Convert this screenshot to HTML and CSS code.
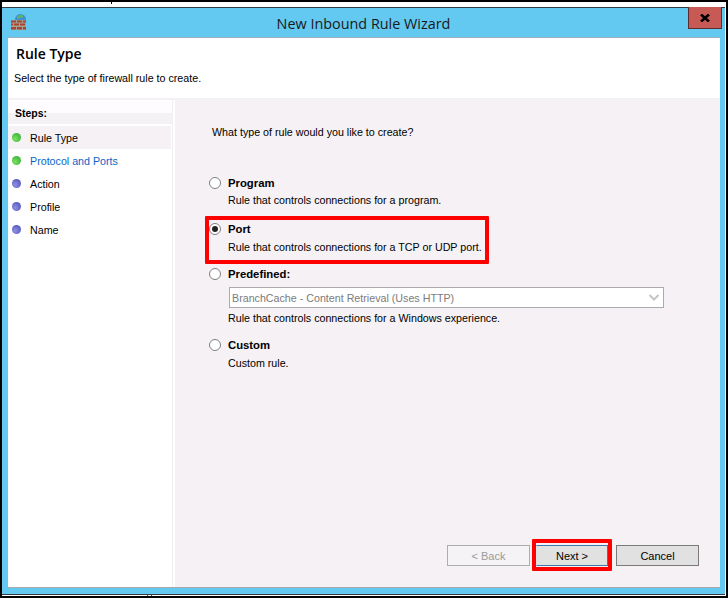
FILE: index.html
```html
<!DOCTYPE html>
<html lang="en">
<head>
<meta charset="utf-8">
<title>New Inbound Rule Wizard</title>
<link rel="stylesheet" href="styles.css">
</head>
<body>
<div class="screen">
  <div class="strip"><span class="tick"></span></div>
  <div class="window">
    <header class="titlebar">
      <svg class="app-icon" width="18" height="18" viewBox="0 0 18 18">
        <circle cx="10.500" cy="6.500" r="5.500" fill="#3f8fd8"/>
        <path d="M7 3.500c2-2 5-2 6.500-.5l-1.500 2-2-.5-1 1.500-2-1z" fill="#5cb85c"/>
        <path d="M12 8l3-1.500c.5 1.500 0 3-1 4.500h-2z" fill="#6fc46f"/>
        <rect x="1" y="7" width="15" height="10" fill="#a8a097"/>
        <path d="M1 7.500h5v2H1zM7 7.500h5v2H7zM13 7.500h3v2h-3zM1 10.500h2v2H1zM4 10.500h5v2H4zM10 10.500h5v2h-5zM1 14h5v2.500H1zM7 14h5v2.500H7zM13 14h3v2.500h-3z" fill="#a5472f"/>
      </svg>
      <span class="title">New Inbound Rule Wizard</span>
      <button class="close" type="button" aria-label="Close">
        <svg width="10" height="8" viewBox="0 0 10 8"><path d="M1 .5l8 7M9 .5l-8 7" stroke="#000" stroke-width="2.600" fill="none"/></svg>
      </button>
    </header>
    <div class="client">
      <section class="heading">
        <h1>Rule Type</h1>
        <p>Select the type of firewall rule to create.</p>
      </section>
      <div class="body">
        <aside class="steps">
          <h2>Steps:</h2>
          <ul>
            <li class="step done current"><i></i>Rule Type</li>
            <li class="step done link"><i></i>Protocol and Ports</li>
            <li class="step"><i></i>Action</li>
            <li class="step"><i></i>Profile</li>
            <li class="step"><i></i>Name</li>
          </ul>
        </aside>
        <main class="panel">
          <p class="question">What type of rule would you like to create?</p>
          <div class="options">
            <div class="option first">
              <div class="label"><span class="radio"></span><b>Program</b></div>
              <p class="desc">Rule that controls connections for a program.</p>
            </div>
            <div class="option marked">
              <div class="label"><span class="radio checked"></span><b>Port</b></div>
              <p class="desc">Rule that controls connections for a TCP or UDP port.</p>
              <span class="redbox port-box"></span>
            </div>
            <div class="option predefined">
              <div class="label"><span class="radio"></span><b>Predefined:</b></div>
              <div class="select">
                <span>BranchCache - Content Retrieval (Uses HTTP)</span>
                <svg width="12" height="7" viewBox="0 0 12 7"><path d="M1.500 1l4.500 4.500L10.500 1" stroke="#c4c4c4" stroke-width="2" fill="none"/></svg>
              </div>
              <p class="desc">Rule that controls connections for a Windows experience.</p>
            </div>
            <div class="option custom">
              <div class="label"><span class="radio"></span><b>Custom</b></div>
              <p class="desc">Custom rule.</p>
            </div>
          </div>
          <footer class="buttons">
            <button class="btn disabled" type="button">&lt; Back</button>
            <div class="marked next-wrap">
              <button class="btn next" type="button">Next &gt;</button>
              <span class="redbox next-box"></span>
            </div>
            <button class="btn cancel" type="button">Cancel</button>
          </footer>
        </main>
      </div>
    </div>
  </div>
  <span class="bottom-ticks"></span>
</div>
</body>
</html>
```
FILE: styles.css
```css
* { box-sizing: border-box; }
html, body { margin: 0; padding: 0; }
body {
  width: 728px;
  height: 598px;
  overflow: hidden;
  background: #000;
  font-family: "Liberation Sans", Arial, sans-serif;
  font-size: 10.7px;
  color: #000;
}
p, h1, h2, ul { margin: 0; padding: 0; }
ul { list-style: none; }

.screen {
  position: relative;
  width: 728px;
  height: 598px;
  border: 2px solid #000;
  display: flex;
  flex-direction: column;
  background: #fff;
}
.strip { height: 5px; background: #fff; position: relative; flex: none; }
.tick { position: absolute; left: 109px; top: 0; width: 1px; height: 2px; background: #000; }
.bottom-ticks {
  position: absolute;
  left: 145px;
  bottom: 0;
  width: 5px;
  height: 1px;
  border-left: 1px solid #555;
  border-right: 1px solid #555;
}

.window {
  flex: 1;
  min-height: 0;
  display: flex;
  flex-direction: column;
  background: #63c9f0;
  border-top: 1px solid #2f3a42;
  border-bottom: 1px solid #2f3a42;
  padding: 0 5px 6px 6px;
  margin-right: 1px;
  margin-bottom: 1px;
}
.titlebar {
  height: 29px;
  flex: none;
  display: flex;
  align-items: center;
  justify-content: center;
  position: relative;
  margin: 0 -5px 0 -6px;
}
.app-icon { position: absolute; left: 8px; top: 5px; }
.title {
  font-family: "Open Sans", sans-serif;
  font-size: 14.4px;
  color: #1a1a1a;
  margin-top: 1px;
}
.close {
  position: absolute;
  right: 3px;
  top: -1px;
  width: 34px;
  height: 22px;
  padding: 0;
  border: 1px solid #5a2e2e;
  border-top-width: 0;
  background: #c75a55;
  display: flex;
  align-items: center;
  justify-content: center;
}

.client {
  flex: 1;
  min-height: 0;
  display: flex;
  flex-direction: column;
  background: #fff;
  border-top: 1px solid #9db0c0;
  border-bottom: 1px solid #a9a9a9;
}
.heading {
  height: 62px;
  flex: none;
  padding: 7px 0 0 8px;
  border-bottom: 2px solid #f3f1f3;
}
.heading h1 {
  font-family: "Open Sans", sans-serif;
  font-size: 14px;
  font-weight: 600;
  line-height: 17px;
}
.heading p { margin-top: 8px; margin-left: -2px; line-height: 16px; }

.body { flex: 1; min-height: 0; display: flex; }
.steps {
  width: 167px;
  flex: none;
  background: linear-gradient(to right, #fff 164px, #f1eff1 164px, #f1eff1 165px, #fff 165px);
  padding-top: 2px;
}
.steps h2 {
  width: 164px;
  height: 22px;
  padding: 3px 0 0 7px;
  font-size: 10.5px;
  font-weight: 700;
  line-height: 16px;
  background: linear-gradient(#fefcfe 0, #fefcfe 50%, #f5f2f5 50%, #f5f2f5 100%);
}
.steps ul { margin-top: 2px; }
.step {
  height: 23px;
  width: 163px;
  display: flex;
  align-items: center;
  padding-left: 4px;
}
.step i {
  width: 9px;
  height: 9px;
  border-radius: 50%;
  margin-right: 9px;
  background: radial-gradient(circle at 35% 65%, #8f8fe6, #5c5cc0 70%);
  flex: none;
}
.step.done i { background: radial-gradient(circle at 35% 65%, #7fe060, #3fb83f 70%); }
.step.current { background: #f5f1f5; }
.step.link { color: #0a66c8; }

.panel {
  flex: 1;
  min-width: 0;
  display: flex;
  flex-direction: column;
  background: #f5f1f5;
  padding: 24px 21px 21px 34px;
}
.question { margin-left: 3px; line-height: 16px; }
.options { margin-top: 35px; }
.option { position: relative; margin-top: 13px; }
.option.first { margin-top: 0; }
.option.predefined { margin-top: 11px; }
.option.custom { margin-top: 11px; }
.label { display: flex; align-items: center; height: 16px; }
.label b { font-weight: 700; font-size: 11.3px; }
.radio {
  width: 12px;
  height: 12px;
  border-radius: 50%;
  border: 1px solid #7f7f7f;
  background: #fff;
  margin-right: 7px;
  flex: none;
  position: relative;
}
.radio.checked::after {
  content: "";
  position: absolute;
  left: 2px;
  top: 2px;
  width: 6px;
  height: 6px;
  border-radius: 50%;
  background: #222;
}
.desc { margin: 1px 0 0 19px; line-height: 16px; }
.select {
  margin: 5px 0 0 20px;
  width: 435px;
  height: 21px;
  background: #fff;
  border: 1px solid #ababab;
  display: flex;
  align-items: center;
  justify-content: space-between;
  padding: 0 3px 0 2px;
  color: #7b7b7b;
}
.select + .desc { margin-top: 2px; }
.marked .desc { margin-top: 2px; }
.custom .desc { margin-top: 2px; }

.marked { position: relative; }
.redbox {
  position: absolute;
  border: 4px solid #f00;
  border-radius: 1px;
  pointer-events: none;
}
.port-box { left: -4px; top: -5px; width: 284px; height: 48px; }

.buttons { margin-top: auto; display: flex; justify-content: flex-end; }
.btn {
  width: 83px;
  height: 21px;
  padding: 0;
  font-family: inherit;
  font-size: 11px;
  color: #000;
  background: #e1e1e1;
  border: 1px solid #7a7a7a;
}
.btn.disabled { background: #f5f3f5; border-color: #adadad; color: #9a9a9a; }
.next-wrap { margin-left: 6px; }
.btn.next { display: block; width: 72px; border-color: #3c78b0 #3c78b0 #3c78b0 #e1e1e1; }
.next-box { left: -4px; top: -6px; width: 80px; height: 32px; }
.btn.cancel { margin-left: 8px; }
```
